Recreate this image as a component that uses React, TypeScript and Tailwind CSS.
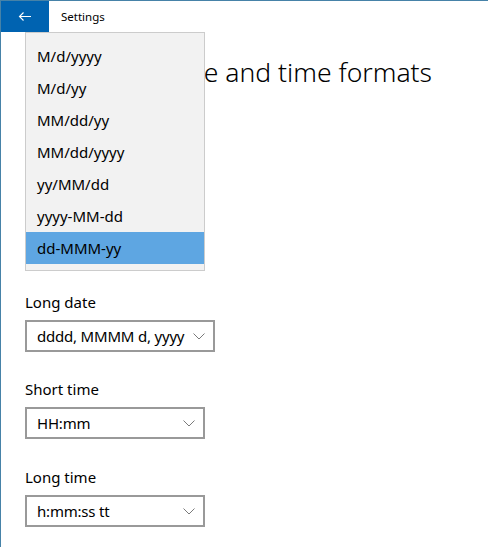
import React from "react"

const font = { fontFamily: '"Noto Sans", "Open Sans", sans-serif' }

const Chevron = () => (
  <svg width="12" height="7" viewBox="0 0 12 7" className="shrink-0">
    <polyline points="0.5,0.5 6,6 11.5,0.5" fill="none" stroke="#7a7a7a" strokeWidth="1" />
  </svg>
)

interface FieldProps {
  label: string
  value: string
  width: string
  top: string
}

const Field = ({ label, value, width, top }: FieldProps) => (
  <div className={top}>
    <p className="text-[15px] leading-[20px] text-black">{label}</p>
    <div className={`mt-[8px] h-[32px] ${width} border-2 border-[#999999] bg-white flex items-center justify-between pl-[10px] pr-[8px]`}>
      <span className="text-[15px] leading-[20px] text-black whitespace-nowrap tracking-[-0.2px]">{value}</span>
      <Chevron />
    </div>
  </div>
)

const options = ["M/d/yyyy", "M/d/yy", "MM/dd/yy", "MM/dd/yyyy", "yy/MM/dd", "yyyy-MM-dd", "dd-MMM-yy"]

export default function App() {
  const selected = "dd-MMM-yy"
  return (
    <div style={font} className="relative w-[488px] h-[547px] overflow-hidden bg-white border-l border-t border-[#4682a8]">
      {/* title bar */}
      <div className="flex h-[31px] items-center">
        <div className="w-[48px] h-full bg-[#0063b1] flex items-center justify-center">
          <svg width="14" height="11" viewBox="0 0 14 11">
            <path d="M13 5.5H1.5M5.5 1.5L1.5 5.5L5.5 9.5" fill="none" stroke="white" strokeWidth="1.1" />
          </svg>
        </div>
        <span className="ml-[12px] text-[11.5px] text-black">Settings</span>
      </div>

      <div className="pl-[24px]">
        <h1 className="mt-[24px] text-[26.5px] leading-[32px] font-light text-black whitespace-nowrap">
          <span className="tracking-[4px]">Change dat</span>e and time formats
        </h1>
        {/* short date field sits under the open list */}
        <Field label="Long date" value="dddd, MMMM d, yyyy" width="w-[190px]" top="mt-[204px]" />
        <Field label="Short time" value="HH:mm" width="w-[180px]" top="mt-[27px]" />
        <Field label="Long time" value="h:mm:ss tt" width="w-[180px]" top="mt-[28px]" />
      </div>

      {/* open dropdown */}
      <div className="absolute left-[24px] top-[31px] w-[180px] border border-[#cccccc] bg-[#f2f2f2] pt-[7px] pb-[6px]">
        {options.map((o) => (
          <div
            key={o}
            className={`h-[32px] flex items-center pl-[11px] text-[15px] text-black ${o === selected ? "bg-[#5ea6e2]" : ""}`}
          >
            {o}
          </div>
        ))}
      </div>
    </div>
  )
}
